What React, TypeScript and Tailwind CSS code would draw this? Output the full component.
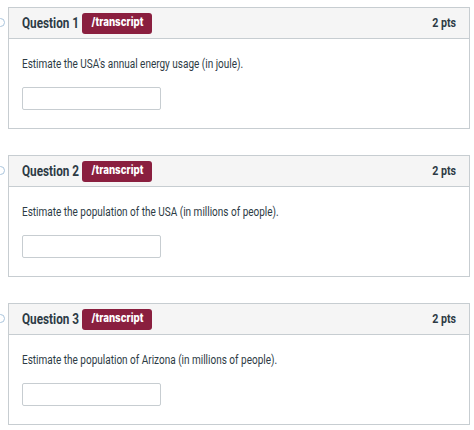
import React from "react";

const questions = [
  { n: 1, text: "Estimate the USA's annual energy usage (in joule)." },
  { n: 2, text: "Estimate the population of the USA (in millions of people)." },
  { n: 3, text: "Estimate the population of Arizona (in millions of people)." },
];

function Card({ n, text }: { n: number; text: string }) {
  return (
    <div className="relative">
      <div className="absolute left-[-12px] top-[11px] h-[9px] w-[9px] rounded-full border border-[#a9c4dc]" />
      <div className="border border-[#c7cdd1] bg-white">
        <div className="flex h-[31px] items-center justify-between border-b border-[#c7cdd1] bg-[#f5f5f5] pl-[13px] pr-[13px]">
          <div className="flex items-center">
            <span className="inline-block w-[57px] origin-left scale-x-[0.84] whitespace-nowrap text-[14px] font-bold text-[#2d3b45]">
              Question {n}
            </span>
            <span className="ml-[3px] flex h-[21px] w-[70px] items-center justify-center rounded-[3px] bg-[#8a1f3f]">
              <span
                className="inline-block scale-x-[0.85] whitespace-nowrap text-[11.5px] font-extrabold text-white"
                style={{ fontFamily: "Inter, 'Open Sans', sans-serif" }}
              >
                /transcript
              </span>
            </span>
          </div>
          <span className="inline-block origin-right scale-x-[0.82] whitespace-nowrap text-[13px] font-bold text-[#2d3b45]">
            2 pts
          </span>
        </div>
        <div className="pl-[13px] pt-[17px] pb-[18px]">
          <p className="origin-left scale-x-[0.8] whitespace-nowrap text-[12.5px] leading-[16px] text-[#2d3b45]">{text}</p>
          <div className="mt-[15px] h-[23px] w-[139px] rounded-[2px] border border-[#c7cdd1] bg-white" />
        </div>
      </div>
    </div>
  );
}

export default function App() {
  return (
    <div
      className="h-[430px] w-[474px] overflow-hidden bg-white pl-[8px] pr-[4px] pt-[7px]"
      style={{ fontFamily: "Roboto, 'Liberation Sans', sans-serif" }}
    >
      <div className="flex flex-col gap-[26px]">
        {questions.map((q) => (
          <Card key={q.n} n={q.n} text={q.text} />
        ))}
      </div>
    </div>
  );
}
